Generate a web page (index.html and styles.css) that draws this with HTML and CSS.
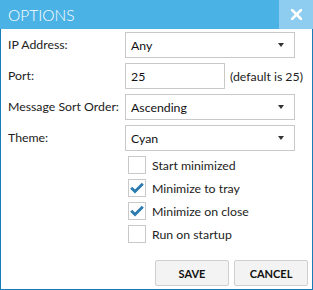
FILE: index.html
```html
<!DOCTYPE html>
<html>
<head>
<meta charset="utf-8">
<link rel="stylesheet" href="styles.css">
</head>
<body>
<div class="window">
  <div class="titlebar">
    <div class="title">OPTIONS</div>
    <div class="close">
      <svg width="11" height="11" viewBox="0 0 11 11"><path d="M1 1 L10 10 M10 1 L1 10" stroke="#fff" stroke-width="2.6" stroke-linecap="square"/></svg>
    </div>
  </div>
  <div class="content">
    <div class="form">
      <div class="label">IP Address:</div>
      <div class="select"><span>Any</span><span class="arrow"></span></div>

      <div class="label">Port:</div>
      <div class="port-row"><div class="input">25</div><span class="hint">(default is 25)</span></div>

      <div class="label">Message Sort Order:</div>
      <div class="select"><span>Ascending</span><span class="arrow"></span></div>

      <div class="label">Theme:</div>
      <div class="select"><span>Cyan</span><span class="arrow"></span></div>
    </div>
    <div class="checks">
      <div class="check"><span class="box"></span><span>Start minimized</span></div>
      <div class="check"><span class="box"><svg width="14" height="12" viewBox="0 0 14 12"><path d="M1.2 5.8 L5 9.6 L12.8 1.8" fill="none" stroke="#2b7bb0" stroke-width="2.8"/></svg></span><span>Minimize to tray</span></div>
      <div class="check"><span class="box"><svg width="14" height="12" viewBox="0 0 14 12"><path d="M1.2 5.8 L5 9.6 L12.8 1.8" fill="none" stroke="#2b7bb0" stroke-width="2.8"/></svg></span><span>Minimize on close</span></div>
      <div class="check"><span class="box"></span><span>Run on startup</span></div>
    </div>
    <div class="buttons">
      <div class="btn">SAVE</div>
      <div class="btn">CANCEL</div>
    </div>
  </div>
</div>
</body>
</html>
```
FILE: styles.css
```css
html, body {
  margin: 0;
  padding: 0;
  background: #fff;
}
body {
  font-family: Lato, "Noto Sans", sans-serif;
  font-size: 12.3px;
  color: #222;
}
.window {
  width: 311px;
  height: 289px;
  border: 1px solid #1a7cb6;
  border-top: none;
  display: flex;
  flex-direction: column;
}
.titlebar {
  height: 29px;
  background: #4bb2e5;
  display: flex;
  align-items: stretch;
  margin: 0 -1px;
}
.title {
  flex: 1;
  color: #fff;
  font-size: 15.5px;
  font-weight: 300;
  padding-left: 8px;
  line-height: 30px;
}
.close {
  width: 34px;
  background: #8ecdf0;
  display: flex;
  align-items: center;
  justify-content: center;
}
.content {
  padding: 3px 4px 0 7px;
  display: flex;
  flex-direction: column;
}
.form {
  display: grid;
  grid-template-columns: 117px 170px;
  row-gap: 5px;
  align-items: center;
}
.label {
  line-height: 26px;
}
.select, .input {
  height: 24px;
  border: 1px solid #c9c9c9;
  box-sizing: content-box;
  display: flex;
  align-items: center;
  padding: 0 10px 0 5px;
  color: #111;
}
.select {
  justify-content: space-between;
}
.arrow {
  width: 0;
  height: 0;
  border-left: 3.5px solid transparent;
  border-right: 3.5px solid transparent;
  border-top: 4px solid #333;
}
.port-row {
  display: flex;
  align-items: center;
  width: max-content;
}
.input {
  width: 83px;
}
.hint {
  margin-left: 5px;
  white-space: nowrap;
}
.checks {
  margin-top: 5px;
  margin-left: 120px;
  display: flex;
  flex-direction: column;
  gap: 5px;
}
.check {
  display: flex;
  align-items: center;
  height: 18px;
}
.box {
  width: 16px;
  height: 16px;
  border: 1px solid #c9c9c9;
  margin-right: 6px;
  display: flex;
  align-items: center;
  justify-content: center;
}
.buttons {
  margin-top: 17px;
  display: flex;
  justify-content: flex-end;
  gap: 5px;
}
.btn {
  width: 72px;
  height: 24px;
  border: 1px solid #cfcfcf;
  border-radius: 2px;
  background: #f3f3f3;
  font-weight: bold;
  font-size: 11px;
  display: flex;
  align-items: center;
  justify-content: center;
  color: #111;
}
```
